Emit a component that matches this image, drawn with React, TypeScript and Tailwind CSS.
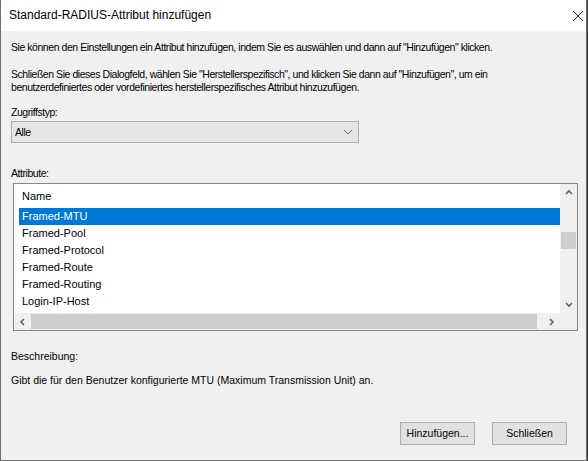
import React from "react";

const rows = ["Framed-MTU", "Framed-Pool", "Framed-Protocol", "Framed-Route", "Framed-Routing", "Login-IP-Host"];

function Chevron({ dir }: { dir: "up" | "down" | "left" | "right" }) {
  const paths: Record<string, string> = {
    up: "M1 5 L4 2 L7 5",
    down: "M1 2 L4 5 L7 2",
    left: "M5 1 L2 4 L5 7",
    right: "M2 1 L5 4 L2 7",
  };
  return (
    <svg width="8" height="8" viewBox="0 0 8 8">
      <path d={paths[dir]} fill="none" stroke="#606060" strokeWidth="1.6" />
    </svg>
  );
}

export default function App() {
  const body = { fontFamily: '"Liberation Sans", Arial, sans-serif' };
  return (
    <div className="w-[588px] h-[461px] bg-[#3a3a3a] overflow-hidden">
      <div
        className="w-[587px] h-[461px] flex flex-col bg-[#f0f0f0] border-x border-b border-[#707070] text-[10.5px] text-black leading-[13px] tracking-[-0.45px]"
        style={body}
      >
        <div className="h-[31px] shrink-0 bg-white flex items-center justify-between pl-[8px] pr-[1px] tracking-normal">
          <span className="text-[12px]">Standard-RADIUS-Attribut hinzufügen</span>
          <svg width="12" height="12" viewBox="0 0 12 12" className="mr-[1px]">
            <path d="M1 1 L11 11 M11 1 L1 11" stroke="#222" strokeWidth="1" />
          </svg>
        </div>
        <div className="flex flex-col pl-[10px] pr-[10px]">
          <p className="mt-[10px] whitespace-nowrap">
            Sie können den Einstellungen ein Attribut hinzufügen, indem Sie es auswählen und dann auf "Hinzufügen" klicken.
          </p>
          <p className="mt-[14px]">
            <span className="block whitespace-nowrap">
              Schließen Sie dieses Dialogfeld, wählen Sie "Herstellerspezifisch", und klicken Sie dann auf "Hinzufügen", um ein
            </span>
            <span className="block whitespace-nowrap">
              benutzerdefiniertes oder vordefiniertes herstellerspezifisches Attribut hinzuzufügen.
            </span>
          </p>
          <p className="mt-[12px]">Zugriffstyp:</p>
          <div className="mt-[2px] w-[348px] h-[22px] bg-[#e5e5e5] border border-[#acacac] flex items-center justify-between pl-[3px] pr-[5px]">
            <span>Alle</span>
            <svg width="10" height="6" viewBox="0 0 10 6">
              <path d="M1 1 L5 5 L9 1" fill="none" stroke="#707070" strokeWidth="1" />
            </svg>
          </div>
          <p className="mt-[24px]">Attribute:</p>
          <div className="mt-[3px] ml-[2px] w-[565px] h-[148px] border border-[#828790] bg-white flex flex-col text-[11px] tracking-normal">
            <div className="flex flex-1 min-h-0">
              <div className="flex-1 flex flex-col pl-[5px]">
                <div className="h-[24px] flex items-center pl-[3px]">Name</div>
                {rows.map((r, i) => (
                  <div
                    key={r}
                    className={
                      "h-[17px] flex items-center pl-[3px] " +
                      (i === 0 ? "bg-[#0078d7] text-white" : "")
                    }
                  >
                    {r}
                  </div>
                ))}
              </div>
              <div className="w-[17px] bg-[#f0f0f0] flex flex-col items-center">
                <div className="h-[17px] flex items-center justify-center">
                  <Chevron dir="up" />
                </div>
                <div className="flex-1 w-full flex flex-col">
                  <div className="h-[31px]" />
                  <div className="h-[17px] mx-[1px] bg-[#cdcdcd]" />
                </div>
                <div className="h-[17px] flex items-center justify-center">
                  <Chevron dir="down" />
                </div>
              </div>
            </div>
            <div className="h-[17px] flex bg-[#f0f0f0]">
              <div className="w-[17px] flex items-center justify-center">
                <Chevron dir="left" />
              </div>
              <div className="flex-1 flex items-center">
                <div className="h-[15px] w-[506px] bg-[#cdcdcd]" />
              </div>
              <div className="w-[17px] flex items-center justify-center">
                <Chevron dir="right" />
              </div>
              <div className="w-[17px]" />
            </div>
          </div>
          <p className="mt-[19px] tracking-normal">Beschreibung:</p>
          <p className="mt-[11px] tracking-normal">
            Gibt die für den Benutzer konfigurierte MTU (Maximum Transmission Unit) an.
          </p>
          <div className="mt-[35px] flex justify-end gap-[17px] pr-[9px] tracking-normal">
            <button className="w-[75px] h-[23px] bg-[#e1e1e1] border border-[#adadad]">Hinzufügen...</button>
            <button className="w-[75px] h-[23px] bg-[#e1e1e1] border border-[#adadad]">Schließen</button>
          </div>
        </div>
      </div>
    </div>
  );
}
